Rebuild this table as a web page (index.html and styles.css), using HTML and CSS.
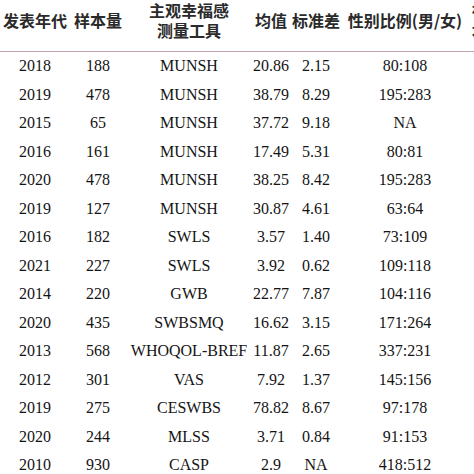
FILE: index.html
```html
<!DOCTYPE html>
<html lang="zh">
<head>
<meta charset="utf-8">
<link rel="stylesheet" href="styles.css">
</head>
<body>
<div class="frame">
<table class="data">
  <colgroup>
    <col class="c1"><col class="c2"><col class="c3"><col class="c4"><col class="c5"><col class="c6"><col class="c7">
  </colgroup>
  <thead>
    <tr>
      <th>发表年代</th>
      <th>样本量</th>
      <th>主观幸福感<br>测量工具</th>
      <th>均值</th>
      <th>标准差</th>
      <th>性别比例(男/女)</th>
      <th class="cut">被试<br>地区</th>
    </tr>
  </thead>
  <tbody>
    <tr><td>2018</td><td>188</td><td>MUNSH</td><td>20.86</td><td>2.15</td><td>80:108</td><td></td></tr>
    <tr><td>2019</td><td>478</td><td>MUNSH</td><td>38.79</td><td>8.29</td><td>195:283</td><td></td></tr>
    <tr><td>2015</td><td>65</td><td>MUNSH</td><td>37.72</td><td>9.18</td><td>NA</td><td></td></tr>
    <tr><td>2016</td><td>161</td><td>MUNSH</td><td>17.49</td><td>5.31</td><td>80:81</td><td></td></tr>
    <tr><td>2020</td><td>478</td><td>MUNSH</td><td>38.25</td><td>8.42</td><td>195:283</td><td></td></tr>
    <tr><td>2019</td><td>127</td><td>MUNSH</td><td>30.87</td><td>4.61</td><td>63:64</td><td></td></tr>
    <tr><td>2016</td><td>182</td><td>SWLS</td><td>3.57</td><td>1.40</td><td>73:109</td><td></td></tr>
    <tr><td>2021</td><td>227</td><td>SWLS</td><td>3.92</td><td>0.62</td><td>109:118</td><td></td></tr>
    <tr><td>2014</td><td>220</td><td>GWB</td><td>22.77</td><td>7.87</td><td>104:116</td><td></td></tr>
    <tr><td>2020</td><td>435</td><td>SWBSMQ</td><td>16.62</td><td>3.15</td><td>171:264</td><td></td></tr>
    <tr><td>2013</td><td>568</td><td>WHOQOL-BREF</td><td>11.87</td><td>2.65</td><td>337:231</td><td></td></tr>
    <tr><td>2012</td><td>301</td><td>VAS</td><td>7.92</td><td>1.37</td><td>145:156</td><td></td></tr>
    <tr><td>2019</td><td>275</td><td>CESWBS</td><td>78.82</td><td>8.67</td><td>97:178</td><td></td></tr>
    <tr><td>2020</td><td>244</td><td>MLSS</td><td>3.71</td><td>0.84</td><td>91:153</td><td></td></tr>
    <tr><td>2010</td><td>930</td><td>CASP</td><td>2.9</td><td>NA</td><td>418:512</td><td></td></tr>
  </tbody>
</table>
</div>
</body>
</html>
```
FILE: styles.css
```css
html, body {
  margin: 0;
  padding: 0;
  background: #ffffff;
}
.frame {
  width: 474px;
  height: 474px;
  overflow: hidden;
}
.data {
  border-collapse: collapse;
  table-layout: fixed;
  width: 502px;
  font-family: "Liberation Serif", "Times New Roman", Tinos, "DejaVu Serif", serif;
  color: #141414;
}
.c1 { width: 70px; }
.c2 { width: 56px; }
.c3 { width: 126px; }
.c4 { width: 38px; }
.c5 { width: 52px; }
.c6 { width: 126px; }
.c7 { width: 34px; }
.data th {
  height: 40px;
  padding: 0 0 11px 0;
  font-family: "Noto Sans CJK SC", "Noto Sans CJK JP", sans-serif;
  font-size: 16px;
  line-height: 20px;
  font-weight: 700;
  text-align: center;
  vertical-align: middle;
  white-space: nowrap;
  border-bottom: 1px solid #c2a3ab;
  color: #2a2a2a;
}
.data th.cut {
  text-align: left;
  padding-left: 4px;
}
.data td {
  height: 28.5px;
  padding: 0;
  font-size: 16px;
  line-height: 18px;
  text-align: center;
  vertical-align: middle;
  white-space: nowrap;
}
```
